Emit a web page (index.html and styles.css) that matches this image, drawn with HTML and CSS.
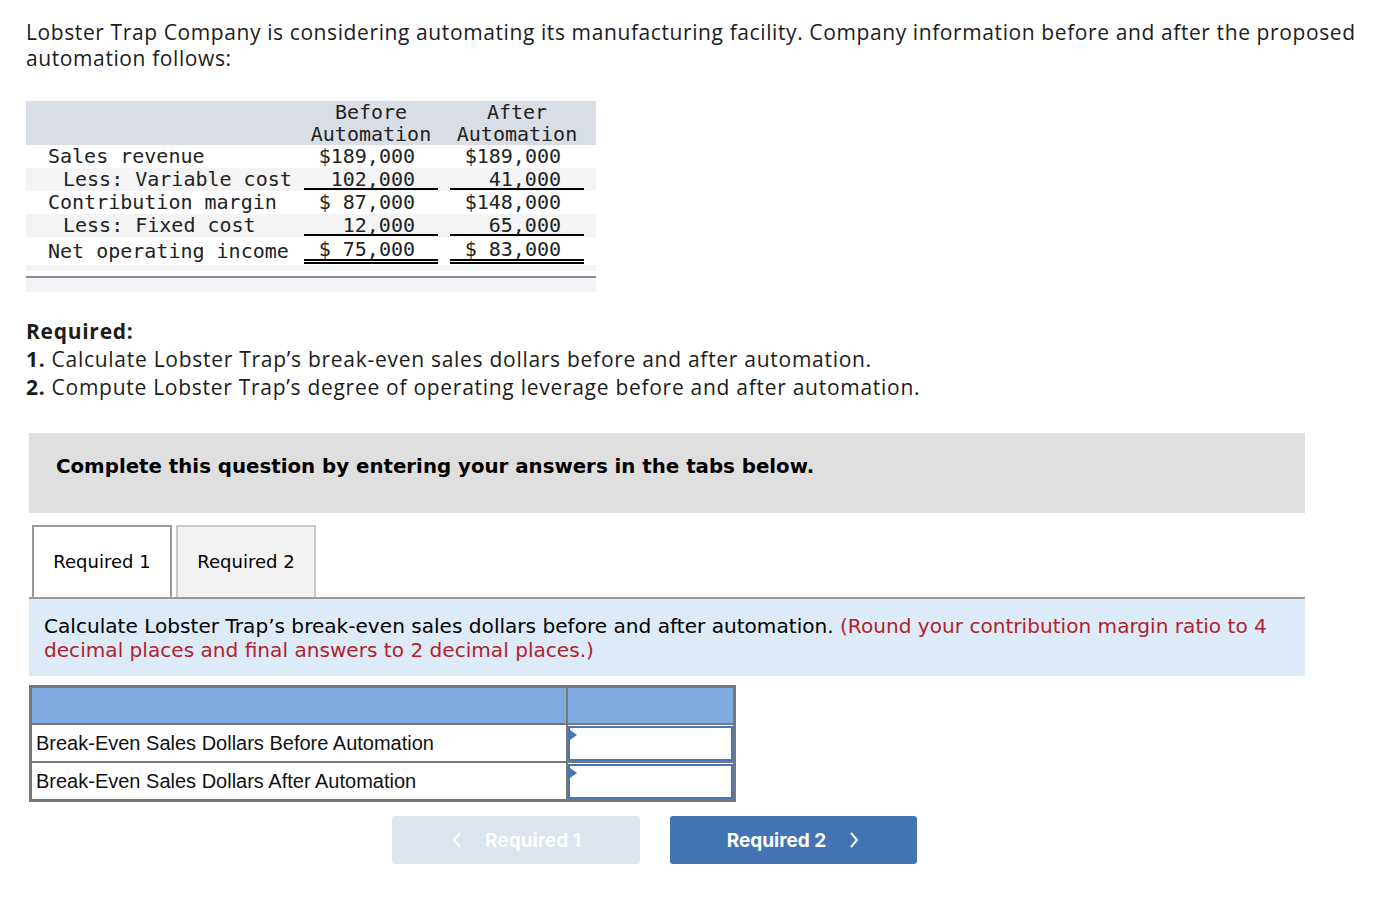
FILE: index.html
```html
<!DOCTYPE html>
<html>
<head>
<meta charset="utf-8">
<link rel="stylesheet" href="styles.css">
</head>
<body>
<div class="page">
  <p class="intro">Lobster Trap Company is considering automating its manufacturing facility. Company information before and after the proposed automation follows:</p>

  <div class="fin">
    <div class="frow fhead">
      <div></div>
      <div class="hc">Before<br>Automation</div>
      <div class="hc">After<br>Automation</div>
    </div>
    <div class="frow">
      <div class="lab">Sales revenue</div>
      <div class="val">$189,000</div>
      <div class="val">$189,000</div>
    </div>
    <div class="frow alt">
      <div class="lab ind">Less: Variable cost</div>
      <div class="val ul">102,000</div>
      <div class="val ul">41,000</div>
    </div>
    <div class="frow">
      <div class="lab">Contribution margin</div>
      <div class="val">$ 87,000</div>
      <div class="val">$148,000</div>
    </div>
    <div class="frow alt">
      <div class="lab ind">Less: Fixed cost</div>
      <div class="val ul">12,000</div>
      <div class="val ul">65,000</div>
    </div>
    <div class="frow net">
      <div class="lab">Net operating income</div>
      <div class="val dul">$ 75,000</div>
      <div class="val dul">$ 83,000</div>
    </div>
    <div class="fgap"></div>
    <div class="ffoot"></div>
  </div>

  <div class="req">
    <div class="reqt">Required:</div>
    <div><b>1.</b> Calculate Lobster Trap’s break-even sales dollars before and after automation.</div>
    <div><b>2.</b> Compute Lobster Trap’s degree of operating leverage before and after automation.</div>
  </div>

  <div class="complete">Complete this question by entering your answers in the tabs below.</div>

  <div class="tabs">
    <div class="tab active">Required 1</div>
    <div class="tab">Required 2</div>
  </div>
  <div class="instr">Calculate Lobster Trap’s break-even sales dollars before and after automation. <span class="red">(Round your contribution margin ratio to 4 </span><span class="red">decimal places and final answers to 2 decimal places.)</span></div>

  <table class="ans">
    <tr class="ahead"><td class="c1"></td><td class="c2"></td></tr>
    <tr><td class="c1">Break-Even Sales Dollars Before Automation</td><td class="c2 inp"><div class="box"><span class="flag"></span></div></td></tr>
    <tr><td class="c1">Break-Even Sales Dollars After Automation</td><td class="c2 inp"><div class="box"><span class="flag"></span></div></td></tr>
  </table>

  <div class="nav">
    <div class="btn prev">
      <svg width="12" height="18" viewBox="0 0 12 18"><path d="M9 2 L3 9 L9 16" fill="none" stroke="#ffffff" stroke-width="2"/></svg>
      <span>Required 1</span>
    </div>
    <div class="btn next">
      <span>Required 2</span>
      <svg width="12" height="18" viewBox="0 0 12 18"><path d="M3 2 L9 9 L3 16" fill="none" stroke="#ffffff" stroke-width="2"/></svg>
    </div>
  </div>
</div>
</body>
</html>
```
FILE: styles.css
```css
html, body { margin: 0; padding: 0; background: #fff; }
.page {
  padding: 19px 0 0 26px;
  font-family: "Open Sans", "Lato", sans-serif;
  color: #1c1c1c;
}
.intro {
  margin: 0;
  width: 1345px;
  font-size: 21px;
  line-height: 26px;
  letter-spacing: 0.6px;
}
.fin {
  margin-top: 30px;
  width: 570px;
  font-family: "DejaVu Sans Mono", monospace;
  font-size: 20px;
  color: #222;
}
.frow {
  display: grid;
  grid-template-columns: 266px 134px 134px;
  column-gap: 12px;
  height: 23px;
  line-height: 23px;
}
.fhead {
  background: #d9dde6;
  height: 44px;
  line-height: 22px;
}
.hc { text-align: center; }
.alt { background: #f4f4f4; }
.lab { padding-left: 22px; white-space: nowrap; }
.lab.ind { padding-left: 37px; }
.val {
  text-align: right;
  padding-right: 23px;
  box-sizing: border-box;
  height: 23px;
}
.ul { border-bottom: 2px solid #000; height: 22px; }
.net { height: 28px; line-height: 28px; }
.net .lab { line-height: 28px; }
.dul { border-bottom: 5px double #000; height: 27px; line-height: 24px; }
.fgap { height: 6px; background: #f4f4f4; }
.ffoot {
  margin-top: 5px;
  height: 14px;
  border-top: 2px solid #8a8a8a;
  background: #f3f4f8;
}
.req {
  margin-top: 25px;
  font-size: 21px;
  line-height: 28px;
  letter-spacing: 0.72px;
}
.reqt { font-weight: bold; }
.complete {
  margin: 32px 0 0 3px;
  width: 1276px;
  height: 80px;
  box-sizing: border-box;
  background: #dfdfdf;
  padding: 22px 27px 0;
  font-family: "DejaVu Sans", Verdana, sans-serif;
  font-weight: bold;
  font-size: 19.8px;
  color: #000;
}
.tabs {
  display: flex;
  gap: 4px;
  margin: 12px 0 0 6px;
  height: 72px;
}
.tab {
  width: 140px;
  box-sizing: border-box;
  font-family: "DejaVu Sans", Verdana, sans-serif;
  font-size: 18px;
  color: #000;
  text-align: center;
  padding-top: 24px;
  background: #f2f2f2;
  border: 2px solid #c8c8c8;
  border-bottom: none;
}
.tab.active {
  background: #fff;
  border-color: #9a9a9a;
}
.instr {
  margin-left: 3px;
  width: 1276px;
  box-sizing: border-box;
  background: #ddebf8;
  border-top: 2px solid #9a9a9a;
  padding: 15px 14px 12px 15px;
  height: 79px;
  font-family: "DejaVu Sans", Verdana, sans-serif;
  font-size: 20.1px;
  line-height: 24px;
  color: #000;
}
.red { color: #b0232a; }
.ans {
  margin: 9px 0 0 3px;
  border-collapse: collapse;
  font-family: "Liberation Sans", Arial, sans-serif;
  font-size: 20px;
  color: #111;
  border: 3px solid #777;
}
.ans td {
  border: 2px solid #777;
  height: 36px;
  padding: 0;
}
.ans .c1 { width: 530px; padding-left: 4px; }
.ans .c2 { width: 165px; }
.ahead td { background: #80abde; height: 35px; }
.inp { position: relative; }
.box {
  position: relative;
  height: 35px;
  box-sizing: border-box;
  border: 2px solid #4a76b8;
  background: #fff;
}
.flag {
  position: absolute;
  left: 0;
  top: 2px;
  width: 0;
  height: 0;
  border-top: 5px solid transparent;
  border-bottom: 5px solid transparent;
  border-left: 7px solid #4a76b8;
}
.nav {
  display: flex;
  gap: 30px;
  margin: 14px 0 0 366px;
}
.btn {
  width: 248px;
  height: 48px;
  border-radius: 3px;
  display: flex;
  align-items: center;
  justify-content: center;
  gap: 22px;
  font-family: "Inter", "Roboto", sans-serif;
  font-weight: 700;
  font-size: 19px;
  color: #fff;
}
.prev { background: #dbe4ef; }
.next { background: #4473b3; width: 247px; }
```
